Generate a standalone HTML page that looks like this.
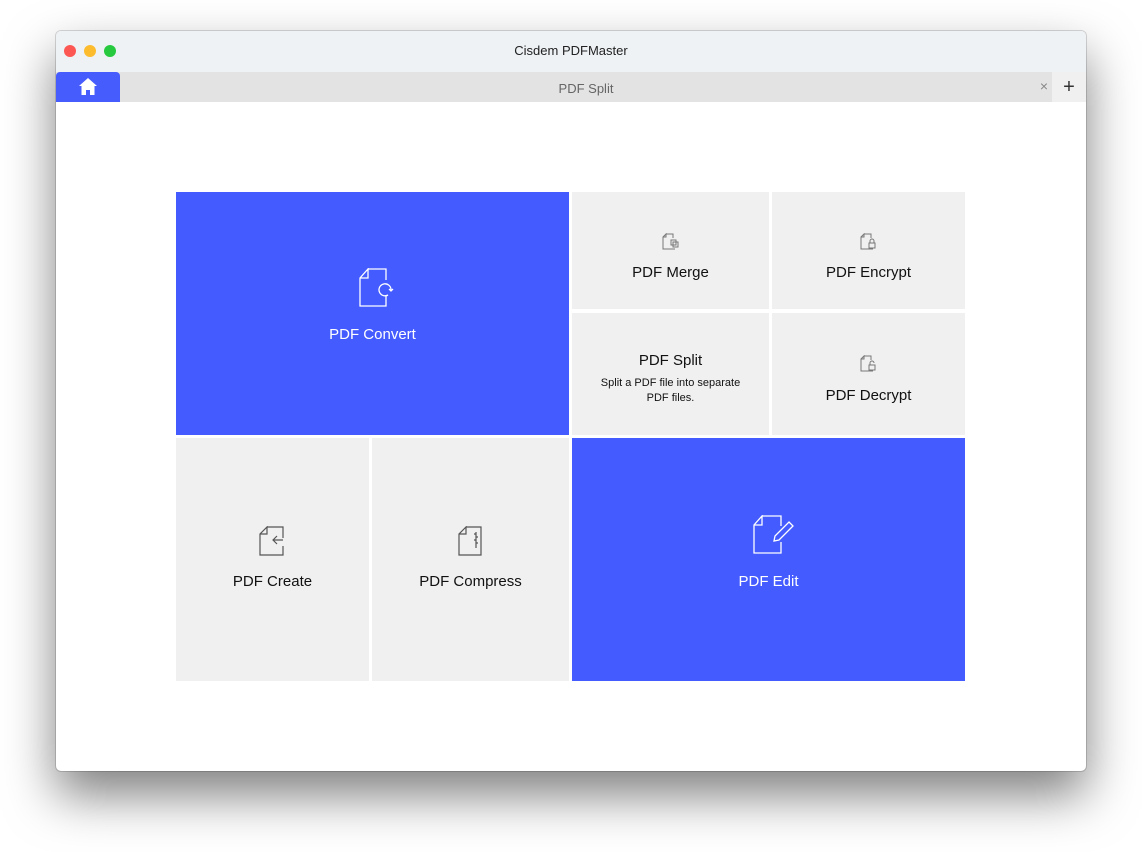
<!DOCTYPE html>
<html><head><meta charset="utf-8"><style>
*{margin:0;padding:0;box-sizing:border-box}
body{width:1142px;height:852px;background:#fff;font-family:"Century Gothic","Liberation Sans",sans-serif;position:relative;overflow:hidden}
.win{position:absolute;left:56px;top:31px;width:1030px;height:740px;background:#fff;border-radius:5px;box-shadow:0 24px 50px rgba(0,0,0,.5),0 0 0 1px rgba(0,0,0,.15);overflow:hidden}
.title{height:41px;background:#eef2f5;text-align:center;font-size:13px;line-height:40px;color:#222}
.dot{position:absolute;top:14px;width:12px;height:12px;border-radius:50%}
.tabs{position:absolute;top:41px;left:0;right:0;height:30px;background:#e3e3e3}
.home{position:absolute;left:0;top:0;width:64px;height:30px;background:#475cfd;border-radius:4px 4px 0 0}
.tab{position:absolute;left:64px;right:34px;top:0;height:30px;text-align:center;line-height:34px;font-size:13px;color:#666}
.t{position:absolute;background:#f0f0f0;text-align:center;color:#111}
.b{background:#435bff;color:#fff}
.t .l{position:absolute;left:0;right:0;font-size:15px}
svg{position:absolute}
</style></head><body>
<div class="win">
<div class="title">Cisdem PDFMaster</div>
<div class="dot" style="left:8px;background:#fc5753"></div>
<div class="dot" style="left:28px;background:#fdbc2e"></div>
<div class="dot" style="left:48px;background:#27c93f"></div>
<div class="tabs">
<div class="home"><svg style="left:23px;top:6px" width="18" height="17" viewBox="0 0 18 17"><path d="M9 0L0 8h2.5v9h4.5v-5h4v5h4.5V8H18z" fill="#fff"/></svg></div>
<div class="tab">PDF Split</div>
<div style="position:absolute;right:38px;top:6px;font-size:14px;color:#888">×</div>
<div style="position:absolute;right:0;top:0;width:34px;height:30px;background:#f0f0f0;text-align:center;line-height:30px;font-size:20px;color:#333">+</div>
</div>
</div>
<div class="t b" style="left:176px;top:192px;width:393px;height:243px">
<svg style="left:183px;top:76px" width="38" height="40" viewBox="0 0 38 40"><path d="M9 1h18v11M27 28v10H1V10L9 1v9H1" fill="none" stroke="#fff" stroke-width="1.3"/><path d="M32 22a6 6 0 1 0-3 5" fill="none" stroke="#fff" stroke-width="1.3"/><path d="M30 21l2 2 2-2" fill="none" stroke="#fff" stroke-width="1.3"/></svg>
<div class="l" style="top:134px">PDF Convert</div></div>
<div class="t" style="left:572px;top:192px;width:197px;height:117px">
<svg style="left:90px;top:41px" width="18" height="17" viewBox="0 0 18 17"><path d="M4 1h7v4M13 16H1V4L4 1v3H1" fill="none" stroke="#777" stroke-width="1"/><rect x="9" y="7" width="5" height="5" fill="none" stroke="#777"/><rect x="11" y="9" width="5" height="5" fill="none" stroke="#777"/></svg>
<div class="l" style="top:72px">PDF Merge</div></div>
<div class="t" style="left:772px;top:192px;width:193px;height:117px">
<svg style="left:88px;top:41px" width="18" height="17" viewBox="0 0 18 17"><path d="M4 1h7v4M13 16H1V4L4 1v3H1" fill="none" stroke="#777"/><rect x="9" y="10" width="6" height="5" fill="none" stroke="#777"/><path d="M10 10V8a2 2 0 0 1 4 0v2" fill="none" stroke="#777"/></svg>
<div class="l" style="top:72px">PDF Encrypt</div></div>
<div class="t" style="left:572px;top:313px;width:197px;height:122px">
<div class="l" style="top:39px">PDF Split</div>
<div class="l" style="top:63px;font-size:11px;line-height:15px">Split a PDF file into separate<br>PDF files.</div></div>
<div class="t" style="left:772px;top:313px;width:193px;height:122px">
<svg style="left:88px;top:42px" width="18" height="17" viewBox="0 0 18 17"><path d="M4 1h7v4M13 16H1V4L4 1v3H1" fill="none" stroke="#777"/><rect x="9" y="10" width="6" height="5" fill="none" stroke="#777"/><path d="M10 10V8a2 2 0 0 1 4 0" fill="none" stroke="#777"/></svg>
<div class="l" style="top:74px">PDF Decrypt</div></div>
<div class="t" style="left:176px;top:438px;width:193px;height:243px">
<svg style="left:83px;top:88px" width="28" height="30" viewBox="0 0 28 30"><path d="M8 1h16v11M24 20v9H1V8L8 1v7H1" fill="none" stroke="#555" stroke-width="1.2"/><path d="M24 14h-10M18 10l-4 4 4 4" fill="none" stroke="#555" stroke-width="1.2"/></svg>
<div class="l" style="top:135px">PDF Create</div></div>
<div class="t" style="left:372px;top:438px;width:197px;height:243px">
<svg style="left:86px;top:88px" width="26" height="30" viewBox="0 0 26 30"><path d="M8 1h15v28H1V8L8 1v7H1" fill="none" stroke="#555" stroke-width="1.2"/><path d="M18 6v16M16 8h2M18 11h2M16 14h2M18 17h2" stroke="#555" stroke-width="1.2"/></svg>
<div class="l" style="top:135px">PDF Compress</div></div>
<div class="t b" style="left:572px;top:438px;width:393px;height:243px">
<svg style="left:181px;top:77px" width="42" height="40" viewBox="0 0 42 40"><path d="M9 1h19v10M28 27v11H1V10L9 1v9H1" fill="none" stroke="#fff" stroke-width="1.3"/><path d="M36 7l4 4-14 14-5 1 1-5z" fill="none" stroke="#fff" stroke-width="1.3"/></svg>
<div class="l" style="top:135px">PDF Edit</div></div>
</body></html>
